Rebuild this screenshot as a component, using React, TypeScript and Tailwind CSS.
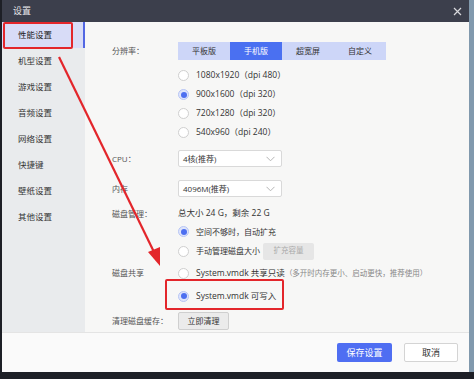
import { ReactNode } from "react";

const font = { fontFamily: '"Open Sans", "Noto Sans CJK SC", sans-serif' };

const navItems = ["性能设置", "机型设置", "游戏设置", "音频设置", "网络设置", "快捷键", "壁纸设置", "其他设置"];
const tabs = ["平板版", "手机版", "超宽屏", "自定义"];
const resolutions = [
  "1080x1920（dpi 480）",
  "900x1600（dpi 320）",
  "720x1280（dpi 320）",
  "540x960（dpi 240）",
];

function Radio({ checked }: { checked?: boolean }) {
  if (checked) {
    return (
      <span className="flex h-[11px] w-[11px] shrink-0 items-center justify-center rounded-full border border-[#b7c5f5] bg-[#dfe5fb]">
        <span className="h-[6px] w-[6px] rounded-full bg-[#4d6ff0]" />
      </span>
    );
  }
  return <span className="h-[11px] w-[11px] shrink-0 rounded-full border border-[#cfcfcf] bg-white" />;
}

function Row({ label, className, children }: { label?: string; className: string; children: ReactNode }) {
  return (
    <div className={`flex items-center ${className}`}>
      <div className="w-[66px] shrink-0 whitespace-nowrap text-[8px] text-[#555]">{label}</div>
      {children}
    </div>
  );
}

function RadioLine({ checked, children, className }: { checked?: boolean; children: ReactNode; className: string }) {
  return (
    <Row className={className}>
      <div className="flex items-center gap-[7px] whitespace-nowrap text-[8.5px] text-[#333]">
        <Radio checked={checked} />
        {children}
      </div>
    </Row>
  );
}

function Select({ value }: { value: string }) {
  return (
    <div className="flex h-[17px] w-[104px] items-center justify-between rounded-[2px] border border-[#d9d9d9] bg-white pl-[4px] pr-[6px] text-[8px] text-[#333]">
      <span>{value}</span>
      <svg width="9" height="6" viewBox="0 0 9 6" fill="none" stroke="#b5b5b5" strokeWidth="1">
        <path d="M0.5 0.8l4 4 4-4" />
      </svg>
    </div>
  );
}

export default function App() {
  return (
    <div className="relative h-[379px] w-[474px] overflow-hidden bg-[#1d1f26]" style={font}>
      <div className="flex h-[372px]">
        <div className="ml-[2px] flex w-[467px] flex-col bg-[#fafafa]">
          {/* title bar */}
          <div className="flex h-[22px] shrink-0 items-center justify-between bg-[#3c3f4c] pl-[11px] pr-[7px]">
            <span className="text-[9px] text-[#e6e6ea]">设置</span>
            <svg width="9" height="9" viewBox="0 0 9 9" stroke="#d8d8dc" strokeWidth="1.2">
              <path d="M1 1l7 7M8 1l-7 7" />
            </svg>
          </div>

          <div className="flex h-[311px] shrink-0 border-b border-[#e4e4e4]">
            {/* sidebar */}
            <div className="flex w-[83px] shrink-0 flex-col bg-[#e9ebed]">
              {navItems.map((n, i) => (
                <div
                  key={n}
                  className={`flex h-[26px] items-center pl-[16px] text-[8.5px] ${
                    i === 0 ? "border-r-2 border-[#5267e3] bg-[#d8dcf7] text-[#222]" : "text-[#333]"
                  }`}
                >
                  {n}
                </div>
              ))}
            </div>

            {/* content */}
            <div className="flex flex-1 flex-col bg-[#f7f7f6] pl-[27px]">
              <Row label="分辨率：" className="mt-[20px] h-[18px]">
                <div className="flex h-[18px]">
                  {tabs.map((t, i) => (
                    <div
                      key={t}
                      className={`flex w-[52px] items-center justify-center text-[8px] ${
                        i === 1 ? "bg-[#4a70f1] text-white" : "bg-[#cdd6f8] text-[#333]"
                      }`}
                    >
                      {t}
                    </div>
                  ))}
                </div>
              </Row>
              <div className="mt-[6px] flex flex-col">
                {resolutions.map((r, i) => (
                  <RadioLine key={r} checked={i === 1} className="h-[19px]">
                    {r}
                  </RadioLine>
                ))}
              </div>

              <Row label="CPU：" className="mt-[8px] h-[17px]">
                <Select value="4核(推荐)" />
              </Row>
              <Row label="内存" className="mt-[13px] h-[17px]">
                <Select value="4096M(推荐)" />
              </Row>

              <Row label="磁盘管理：" className="mt-[8px] h-[17px]">
                <span className="text-[8.5px] text-[#333]">总大小 24 G，剩余 22 G</span>
              </Row>
              <RadioLine checked className="h-[19px]">
                <span className="text-[8px]">空间不够时，自动扩充</span>
              </RadioLine>
              <RadioLine className="h-[20px]">
                <span className="text-[8px]">手动管理磁盘大小</span>
                <span className="ml-[-4px] flex h-[17px] w-[51px] items-center justify-center rounded-[2px] bg-[#e6e6e6] text-[7.5px] text-[#aaa]">
                  扩充容量
                </span>
              </RadioLine>

              <div className="mt-[2px] flex h-[20px] items-center">
                <div className="w-[66px] shrink-0 text-[8px] text-[#555]">磁盘共享</div>
                <div className="flex items-center gap-[7px] whitespace-nowrap text-[8.5px] text-[#333]">
                  <Radio />
                  <span>
                    System.vmdk 共享只读
                    <span className="text-[7.5px] text-[#888]">（多开时内存更小、启动更快，推荐使用）</span>
                  </span>
                </div>
              </div>
              <RadioLine checked className="mt-[3px] h-[20px]">
                System.vmdk 可写入
              </RadioLine>

              <Row label="清理磁盘缓存：" className="mt-[6px] h-[18px]">
                <span className="flex h-[18px] w-[51px] items-center justify-center rounded-[2px] border border-[#cfcfcf] bg-[#ebebeb] text-[8px] text-[#333]">
                  立即清理
                </span>
              </Row>
            </div>
          </div>

          {/* footer */}
          <div className="flex flex-1 items-center justify-end gap-[12px] bg-[#fafafa] pr-[11px]">
            <span className="flex h-[19px] w-[55px] items-center justify-center rounded-[2px] bg-[#4f6ef2] text-[9px] text-white">
              保存设置
            </span>
            <span className="flex h-[19px] w-[54px] items-center justify-center rounded-[2px] border border-[#d4d4d4] bg-white text-[9px] text-[#333]">
              取消
            </span>
          </div>
        </div>
        <div className="w-[5px] bg-[#8199ad]" />
      </div>

      {/* annotations */}
      <div className="absolute left-[3px] top-[22px] h-[27px] w-[70px] rounded-[2px] border-2 border-[#e3262b]" />
      <div className="absolute left-[165px] top-[279px] h-[31px] w-[119px] rounded-[2px] border-2 border-[#e3262b]" />
      <svg className="pointer-events-none absolute left-0 top-0" width="474" height="379">
        <line x1="59" y1="57" x2="154" y2="252" stroke="#e3262b" strokeWidth="2.2" />
        <polygon points="160,266 148,252 160,247" fill="#e3262b" />
      </svg>
    </div>
  );
}
